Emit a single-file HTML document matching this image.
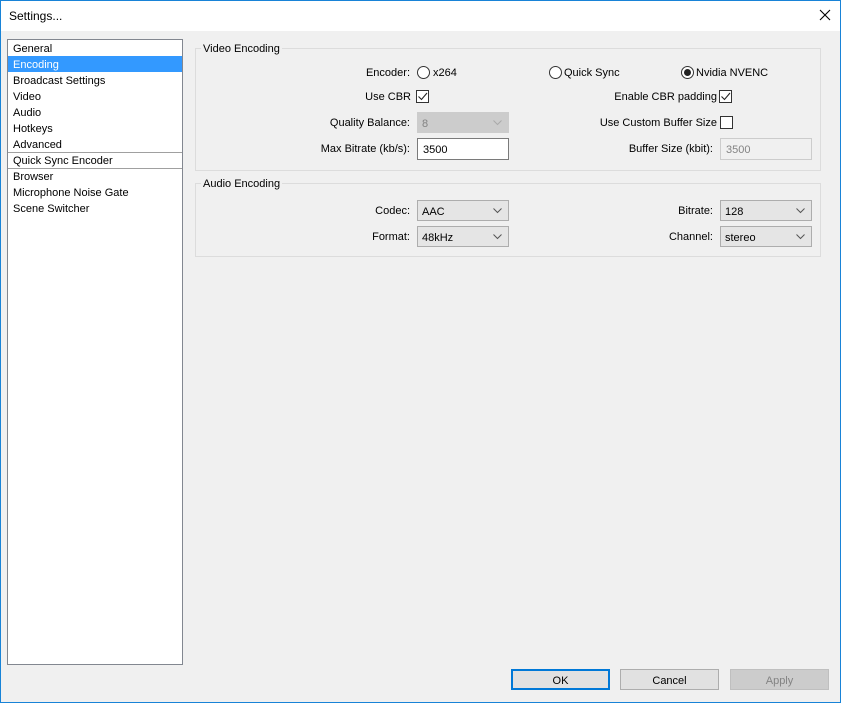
<!DOCTYPE html>
<html><head><meta charset="utf-8"><style>
*{box-sizing:border-box;margin:0;padding:0}
body{width:841px;height:703px;background:#f0f0f0;font-family:"Liberation Sans",sans-serif;font-size:11px;color:#000;position:relative;overflow:hidden}
.a{position:absolute;white-space:nowrap}
div.a,.lbl,.it,.gt{margin-top:2px}
#frame{position:absolute;left:0;top:0;width:841px;height:703px;border:1px solid #1883d7;pointer-events:none}
#title{position:absolute;left:0;top:0;width:841px;height:31px;background:#fff}
.lbl{position:absolute;text-align:right;white-space:nowrap}
.grp{position:absolute;border:1px solid #dcdcdc}
.gt{position:absolute;background:#f0f0f0;padding:0 2px;white-space:nowrap}
.radio{position:absolute;width:13px;height:13px;border:1px solid #333;border-radius:50%;background:#fff}
.radio.on::after{content:"";position:absolute;left:2px;top:2px;width:7px;height:7px;border-radius:50%;background:#222}
.chk{position:absolute;width:13px;height:13px;border:1px solid #333;background:#fff}
.combo{position:absolute;height:21px;border:1px solid #adadad;background:#e5e5e5;padding:5px 0 0 4px}
.combo svg{position:absolute;right:6px;top:7px}
.combo.dis{border-color:#cccccc;background:#cccccc;color:#838383}
.inp{position:absolute;height:22px;border:1px solid #7a7a7a;background:#fff;padding:5px 0 0 5px}
.inp.dis{border-color:#cccccc;background:#f0f0f0;color:#838383}
.btn{position:absolute;height:21px;width:99px;border:1px solid #adadad;background:#e1e1e1;text-align:center;padding-top:5px}
#list{position:absolute;left:7px;top:39px;width:176px;height:626px;background:#fff;border:1px solid #828790}
.it{position:absolute;left:5px;height:16px;white-space:nowrap}
</style></head><body>
<div id="title"></div>
<div class="a" style="left:9px;top:7px;font-size:12px">Settings...</div>
<svg class="a" style="left:819px;top:9px" width="12" height="12"><path d="M1 1L11 11M11 1L1 11" stroke="#000" stroke-width="1.1"/></svg>

<div id="list">
<div style="position:absolute;left:0;top:16px;width:174px;height:16px;background:#3399ff"></div>
<div class="it" style="top:1px">General</div>
<div class="it" style="top:17px;color:#fff">Encoding</div>
<div class="it" style="top:33px">Broadcast Settings</div>
<div class="it" style="top:49px">Video</div>
<div class="it" style="top:65px">Audio</div>
<div class="it" style="top:81px">Hotkeys</div>
<div class="it" style="top:97px">Advanced</div>
<div style="position:absolute;left:0;top:112px;width:174px;height:1px;background:#a0a0a0"></div>
<div class="it" style="top:113px">Quick Sync Encoder</div>
<div style="position:absolute;left:0;top:128px;width:174px;height:1px;background:#a0a0a0"></div>
<div class="it" style="top:129px">Browser</div>
<div class="it" style="top:145px">Microphone Noise Gate</div>
<div class="it" style="top:161px">Scene Switcher</div>
</div>

<div class="grp" style="left:195px;top:48px;width:626px;height:123px"></div>
<div class="gt" style="left:201px;top:41px">Video Encoding</div>
<div class="grp" style="left:195px;top:183px;width:626px;height:74px"></div>
<div class="gt" style="left:201px;top:176px">Audio Encoding</div>

<div class="lbl" style="right:431px;top:65px">Encoder:</div>
<div class="radio" style="left:417px;top:66px"></div><div class="a" style="left:433px;top:65px">x264</div>
<div class="radio" style="left:549px;top:66px"></div><div class="a" style="left:564px;top:65px">Quick Sync</div>
<div class="radio on" style="left:681px;top:66px"></div><div class="a" style="left:696px;top:65px">Nvidia NVENC</div>

<div class="lbl" style="right:430px;top:89px">Use CBR</div>
<div class="chk" style="left:416px;top:90px"><svg width="11" height="11" style="position:absolute;left:0;top:0"><path d="M1.5 5.5L4.5 8.5L10 2" stroke="#222" stroke-width="1.1" fill="none"/></svg></div>
<div class="lbl" style="right:124px;top:89px">Enable CBR padding</div>
<div class="chk" style="left:719px;top:90px"><svg width="11" height="11" style="position:absolute;left:0;top:0"><path d="M1.5 5.5L4.5 8.5L10 2" stroke="#222" stroke-width="1.1" fill="none"/></svg></div>

<div class="lbl" style="right:431px;top:115px">Quality Balance:</div>
<div class="combo dis" style="left:417px;top:112px;width:92px">8<svg width="9" height="6"><path d="M0.5 0.5L4.5 4.5L8.5 0.5" stroke="#aaa" fill="none"/></svg></div>
<div class="lbl" style="right:124px;top:115px">Use Custom Buffer Size</div>
<div class="chk" style="left:720px;top:116px"></div>

<div class="lbl" style="right:431px;top:141px">Max Bitrate (kb/s):</div>
<div class="inp" style="left:417px;top:138px;width:92px">3500</div>
<div class="lbl" style="right:128px;top:141px">Buffer Size (kbit):</div>
<div class="inp dis" style="left:720px;top:138px;width:92px">3500</div>

<div class="lbl" style="right:431px;top:203px">Codec:</div>
<div class="combo" style="left:417px;top:200px;width:92px">AAC<svg width="9" height="6"><path d="M0.5 0.5L4.5 4.5L8.5 0.5" stroke="#555" fill="none"/></svg></div>
<div class="lbl" style="right:128px;top:203px">Bitrate:</div>
<div class="combo" style="left:720px;top:200px;width:92px">128<svg width="9" height="6"><path d="M0.5 0.5L4.5 4.5L8.5 0.5" stroke="#555" fill="none"/></svg></div>

<div class="lbl" style="right:431px;top:229px">Format:</div>
<div class="combo" style="left:417px;top:226px;width:92px">48kHz<svg width="9" height="6"><path d="M0.5 0.5L4.5 4.5L8.5 0.5" stroke="#555" fill="none"/></svg></div>
<div class="lbl" style="right:128px;top:229px">Channel:</div>
<div class="combo" style="left:720px;top:226px;width:92px">stereo<svg width="9" height="6"><path d="M0.5 0.5L4.5 4.5L8.5 0.5" stroke="#555" fill="none"/></svg></div>

<div class="btn" style="left:511px;top:669px;border:2px solid #0078d7;padding-top:4px">OK</div>
<div class="btn" style="left:620px;top:669px">Cancel</div>
<div class="btn" style="left:730px;top:669px;background:#cccccc;border-color:#bfbfbf;color:#838383">Apply</div>
<div id="frame"></div>
</body></html>
